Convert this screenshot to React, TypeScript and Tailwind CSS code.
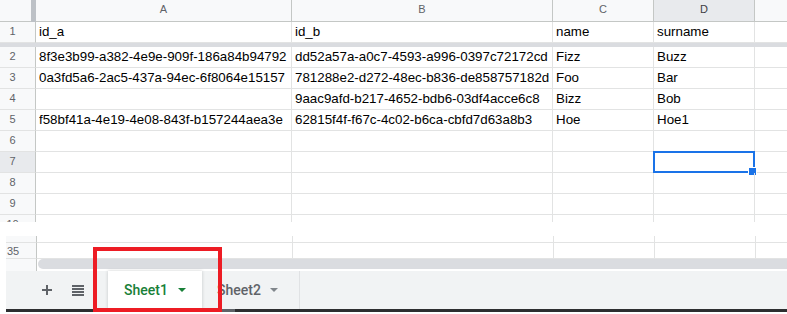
import React from "react";

const W = ["w-[256px]", "w-[261px]", "w-[101px]", "w-[101px]"];
const LETTERS = ["A", "B", "C", "D"];

const DATA: string[][] = [
  ["id_a", "id_b", "name", "surname"],
  ["8f3e3b99-a382-4e9e-909f-186a84b94792", "dd52a57a-a0c7-4593-a996-0397c72172cd", "Fizz", "Buzz"],
  ["0a3fd5a6-2ac5-437a-94ec-6f8064e15157", "781288e2-d272-48ec-b836-de858757182d", "Foo", "Bar"],
  ["", "9aac9afd-b217-4652-bdb6-03df4acce6c8", "Bizz", "Bob"],
  ["f58bf41a-4e19-4e08-843f-b157244aea3e", "62815f4f-f67c-4c02-b6ca-cbfd7d63a8b3", "Hoe", "Hoe1"],
  ["", "", "", ""],
  ["", "", "", ""],
  ["", "", "", ""],
  ["", "", "", ""],
  ["", "", "", ""],
];

function Row({ n, cells }: { n: number; cells: string[] }) {
  const selRow = n === 7;
  return (
    <div className="flex h-[21px] shrink-0">
      <div
        className={`w-[36px] shrink-0 border-r border-b border-r-[#c4c7c5] border-b-[#e2e3e3] ${
          selRow ? "bg-[#e8eaed]" : "bg-[#f8f9fa]"
        } text-[11px] leading-[19px] text-[#5f6368]`}
      >
        <div className="w-[25px] text-center">{n}</div>
      </div>
      {cells.map((c, i) => (
        <div
          key={i}
          className={`${W[i]} relative shrink-0 border-r border-b border-[#e2e3e3] px-[3px] text-[13.33px] leading-[20px] text-black whitespace-nowrap`}
        >
          <div className="overflow-hidden">{c}</div>
          {selRow && i === 3 && (
            <div className="absolute -left-[1px] -top-[1px] w-[102px] h-[22px] border-2 border-[#1a73e8]">
              <div className="absolute -right-[4px] -bottom-[5px] w-[9px] h-[9px] bg-[#1a73e8] border border-white" />
            </div>
          )}
        </div>
      ))}
      <div className="flex-1 border-b border-[#e2e3e3]" />
    </div>
  );
}

function LowerRow({ h, label }: { h: string; label?: string }) {
  return (
    <div className={`flex ${h} shrink-0`}>
      <div className="w-[31px] shrink-0 border-r border-b border-r-[#c4c7c5] border-b-[#e2e3e3] bg-[#f8f9fa] text-[11px] leading-[15px] pt-[1px] pl-[1px] text-[#5f6368] overflow-hidden">
        {label}
      </div>
      {W.map((w, i) => (
        <div key={i} className={`${w} shrink-0 border-r border-b border-[#e2e3e3]`} />
      ))}
      <div className="flex-1 border-b border-[#e2e3e3]" />
    </div>
  );
}

function Caret({ color }: { color: string }) {
  return (
    <svg width="8" height="4" viewBox="0 0 8 4" className="block shrink-0">
      <polygon points="0,0 8,0 4,4" fill={color} />
    </svg>
  );
}

export default function App() {
  return (
    <div
      className="relative w-[787px] h-[314px] bg-white overflow-hidden flex flex-col"
      style={{ fontFamily: '"Liberation Sans", Arial, sans-serif' }}
    >
      {/* upper grid */}
      <div className="h-[222px] shrink-0 overflow-hidden flex flex-col">
        <div className="flex h-[22px] shrink-0">
          <div className="w-[31px] shrink-0 bg-[#f8f9fa] border-b border-[#c4c7c5]" />
          <div className="w-[5px] shrink-0 bg-[#bdc1c6]" />
          {LETTERS.map((l, i) => (
            <div
              key={l}
              className={`${W[i]} shrink-0 border-r border-b border-[#c4c7c5] ${
                l === "D" ? "bg-[#e8eaed] text-[#3c4043]" : "bg-[#f8f9fa] text-[#5f6368]"
              } text-center text-[11px] leading-[19px]`}
            >
              {l}
            </div>
          ))}
          <div className="flex-1 bg-[#f8f9fa] border-b border-[#c4c7c5]" />
        </div>
        <Row n={1} cells={DATA[0]} />
        <div className="h-[4px] shrink-0 bg-[#dadce0]" />
        {DATA.slice(1).map((r, i) => (
          <Row key={i} n={i + 2} cells={r} />
        ))}
      </div>

      <div className="h-[14px] shrink-0" />

      {/* lower section */}
      <div className="ml-[6px] flex flex-col">
        <LowerRow h="h-[7px]" />
        <LowerRow h="h-[16px]" label="35" />
        <div className="flex h-[12px] shrink-0">
          <div className="w-[31px] shrink-0 bg-[#f8f9fa] border-r border-[#c4c7c5]" />
          <div className="flex-1 pl-[1px]">
            <div className="h-[10px] bg-[#dadce0] rounded-l-full" />
          </div>
        </div>
        <div
          className="flex h-[38px] shrink-0 items-center bg-[#f1f3f4]"
          style={{ fontFamily: 'Roboto, "Liberation Sans", Arial, sans-serif' }}
        >
          <div className="ml-[36px] shrink-0">
            <svg width="10" height="10" viewBox="0 0 10 10" className="block">
              <path d="M5 0v10M0 5h10" stroke="#5f6368" strokeWidth="2" />
            </svg>
          </div>
          <div className="ml-[20px] shrink-0">
            <svg width="12" height="11" viewBox="0 0 12 11" className="block">
              <rect x="0" y="0" width="12" height="2" fill="#5f6368" />
              <rect x="0" y="3" width="12" height="2" fill="#5f6368" />
              <rect x="0" y="6" width="12" height="2" fill="#5f6368" />
              <rect x="0" y="9" width="12" height="2" fill="#5f6368" />
            </svg>
          </div>
          <div className="ml-[24px] h-full w-[94px] shrink-0 flex items-center bg-white pl-[16px] shadow-[0_0_3px_rgba(60,64,67,0.25)] z-10">
            <span className="text-[14px] leading-[20px] font-medium text-[#188038]">Sheet1</span>
            <span className="ml-[10px]">
              <Caret color="#188038" />
            </span>
          </div>
          <div className="h-full w-[98px] shrink-0 flex items-center pl-[15px] border-r border-[#e0e2e4]">
            <span className="text-[14px] leading-[20px] font-medium text-[#5f6368]">Sheet2</span>
            <span className="ml-[9px]">
              <Caret color="#80868b" />
            </span>
          </div>
          <div className="flex-1" />
        </div>
        <div className="flex h-[3px] shrink-0">
          <div className="w-[181px] bg-[#2d2e30]" />
          <div className="w-[48px] bg-[#5f6368]" />
          <div className="flex-1 bg-[#2d2e30]" />
        </div>
      </div>

      {/* red annotation box */}
      <div className="absolute left-[93px] top-[247px] w-[129px] h-[65px] border-4 border-[#ed1c24] z-20" />
    </div>
  );
}
